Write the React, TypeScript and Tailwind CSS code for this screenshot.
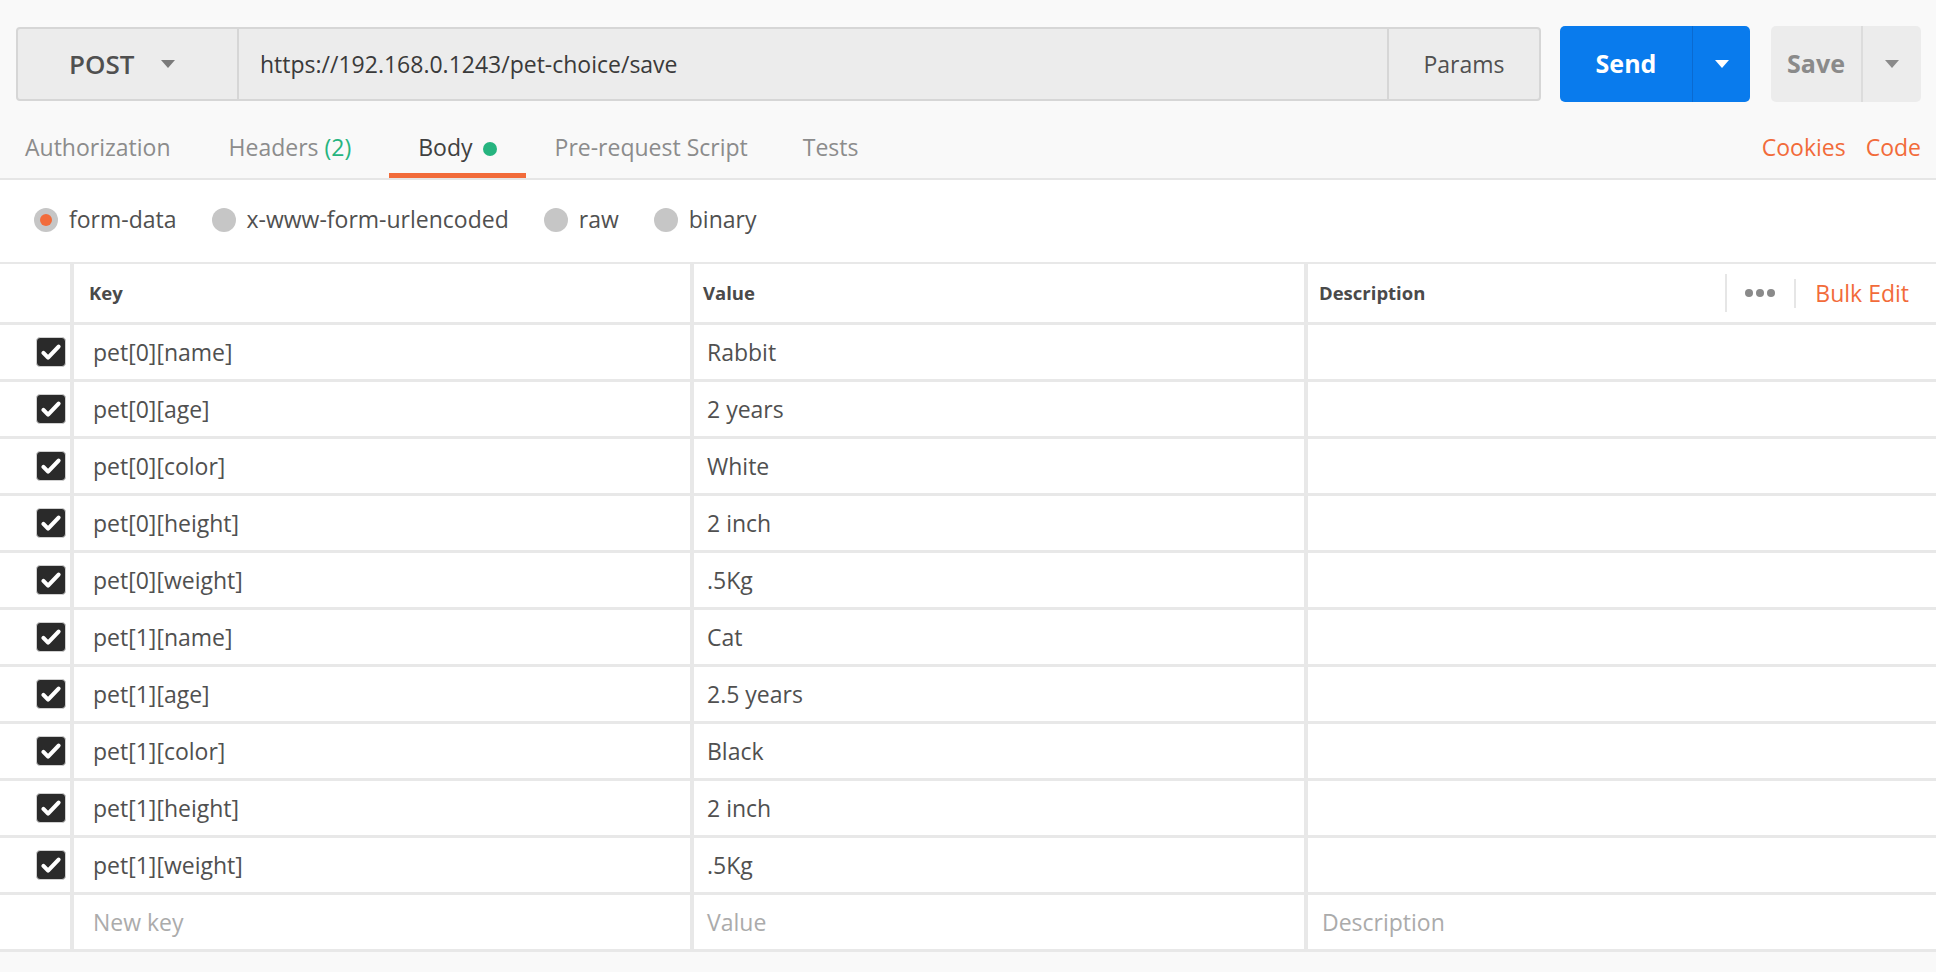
import React from "react";

const rows: [string, string][] = [
  ["pet[0][name]", "Rabbit"],
  ["pet[0][age]", "2 years"],
  ["pet[0][color]", "White"],
  ["pet[0][height]", "2 inch"],
  ["pet[0][weight]", ".5Kg"],
  ["pet[1][name]", "Cat"],
  ["pet[1][age]", "2.5 years"],
  ["pet[1][color]", "Black"],
  ["pet[1][height]", "2 inch"],
  ["pet[1][weight]", ".5Kg"],
];

function Caret({ className }: { className?: string }) {
  return (
    <svg width="14" height="8" viewBox="0 0 14 8" className={className}>
      <path d="M0 0h14L7 8z" fill="currentColor" />
    </svg>
  );
}

function Check() {
  return (
    <div className="flex h-[30px] w-[30px] items-center justify-center rounded-[4px] border border-[#d0d0d0] bg-[#2a2a2a]">
      <svg width="26" height="26" viewBox="0 0 24 24">
        <path d="M5 12.8l4.3 4.4L19 7" fill="none" stroke="#ffffff" strokeWidth="3.8" strokeLinecap="round" strokeLinejoin="round" />
      </svg>
    </div>
  );
}

function Radio({ on, label }: { on?: boolean; label: string }) {
  return (
    <div className="flex items-center">
      <div className="flex h-[24px] w-[24px] items-center justify-center rounded-full bg-[#c6c6c6]">
        {on && <div className="h-[12px] w-[12px] rounded-full bg-[#f26b3a]" />}
      </div>
      <span className="ml-[11px] text-[23px] text-[#505050]">{label}</span>
    </div>
  );
}

export default function App() {
  return (
    <div className="flex h-[972px] w-[1936px] flex-col overflow-hidden bg-[#f9f9f9] font-['Open_Sans',sans-serif]">
      {/* request bar */}
      <div className="flex items-start pl-[16px] pt-[26px]">
        <div className="mt-[1px] flex h-[74px] w-[1525px] rounded-[4px] border-2 border-[#d6d6d6] bg-[#ececec]">
          <div className="flex w-[221px] items-center border-r-2 border-[#d6d6d6] pl-[51px]">
            <span className="text-[26px] font-semibold text-[#505050]">POST</span>
            <Caret className="ml-[27px] text-[#7a7a7a]" />
          </div>
          <div className="flex flex-1 items-center pl-[21px] text-[23px] text-[#3a3a3a]">
            https://192.168.0.1243/pet-choice/save
          </div>
          <div className="flex w-[152px] items-center justify-center border-l-2 border-[#d6d6d6] text-[23px] text-[#505050]">
            Params
          </div>
        </div>
        <div className="ml-[19px] flex h-[76px] w-[190px] rounded-[5px] bg-[#097bed]">
          <div className="flex w-[133px] items-center justify-center border-r border-[#0a6ad0] text-[25px] font-bold text-white">
            Send
          </div>
          <div className="flex flex-1 items-center justify-center">
            <Caret className="text-white" />
          </div>
        </div>
        <div className="ml-[21px] flex h-[76px] w-[150px] rounded-[5px] bg-[#ececec]">
          <div className="flex w-[92px] items-center justify-center border-r-2 border-[#dcdcdc] text-[25px] font-bold text-[#8a8a8a]">
            Save
          </div>
          <div className="flex flex-1 items-center justify-center">
            <Caret className="text-[#8a8a8a]" />
          </div>
        </div>
      </div>

      {/* tabs */}
      <div className="flex h-[78px] items-end justify-between border-b-2 border-[#e6e6e6]">
        <div className="flex items-end">
          <div className="flex h-[56px] items-center border-b-[5px] border-transparent pl-[25px] pr-[28px] text-[23px] text-[#8c8c8c]">
            Authorization
          </div>
          <div className="flex h-[56px] items-center border-b-[5px] border-transparent pl-[30px] pr-[38px] text-[23px] text-[#8c8c8c]">
            Headers<span className="ml-[6px] text-[#26b47f]">(2)</span>
          </div>
          <div className="flex h-[56px] items-center border-b-[5px] border-[#f26b3a] px-[29px] text-[23px] text-[#404040]">
            Body<span className="ml-[10px] mt-[3px] h-[14px] w-[14px] rounded-full bg-[#26b47f]" />
          </div>
          <div className="flex h-[56px] items-center border-b-[5px] border-transparent pl-[29px] pr-[27px] text-[23px] text-[#8c8c8c]">
            Pre-request Script
          </div>
          <div className="flex h-[56px] items-center border-b-[5px] border-transparent px-[28px] text-[23px] text-[#8c8c8c]">
            Tests
          </div>
        </div>
        <div className="flex h-[56px] items-center border-b-[5px] border-transparent pr-[15px] text-[23px] text-[#f26b3a]">
          <span>Cookies</span>
          <span className="ml-[20px]">Code</span>
        </div>
      </div>

      {/* body types */}
      <div className="flex h-[82px] items-center gap-[35px] bg-white pb-[3px] pl-[34px]">
        <Radio on label="form-data" />
        <Radio label="x-www-form-urlencoded" />
        <Radio label="raw" />
        <Radio label="binary" />
      </div>

      {/* table */}
      <div className="border-t-2 border-[#e8e8e8] bg-white">
        <div className="flex h-[61px] border-b-[3px] border-[#e8e8e8] text-[18.5px] font-bold text-[#4a4a4a]">
          <div className="w-[74px] border-r-4 border-[#e8e8e8]" />
          <div className="flex w-[620px] items-center border-r-4 border-[#e8e8e8] pl-[15px]">Key</div>
          <div className="flex w-[614px] items-center border-r-4 border-[#e8e8e8] pl-[9px]">Value</div>
          <div className="flex flex-1 items-center pl-[11px] pr-[27px]">
            <span className="flex-1">Description</span>
            <div className="h-[38px] w-[2px] bg-[#e6e6e6]" />
            <div className="ml-[18px] flex gap-[3px]">
              <div className="h-[8px] w-[8px] rounded-full bg-[#8a8a8a]" />
              <div className="h-[8px] w-[8px] rounded-full bg-[#8a8a8a]" />
              <div className="h-[8px] w-[8px] rounded-full bg-[#8a8a8a]" />
            </div>
            <div className="ml-[19px] h-[29px] w-[2px] bg-[#e6e6e6]" />
            <span className="ml-[19px] text-[23px] font-normal text-[#f26b3a]">Bulk Edit</span>
          </div>
        </div>
        {rows.map(([k, v]) => (
          <div key={k} className="flex h-[57px] border-b-[3px] border-[#e8e8e8] text-[23px] text-[#505050]">
            <div className="flex w-[74px] items-center border-r-4 border-[#e8e8e8] pl-[36px]">
              <Check />
            </div>
            <div className="flex w-[620px] items-center border-r-4 border-[#e8e8e8] pl-[19px]">{k}</div>
            <div className="flex w-[614px] items-center border-r-4 border-[#e8e8e8] pl-[13px]">{v}</div>
            <div className="flex-1" />
          </div>
        ))}
        <div className="flex h-[57px] border-b-[3px] border-[#e8e8e8] text-[23px] text-[#ababab]">
          <div className="w-[74px] border-r-4 border-[#e8e8e8]" />
          <div className="flex w-[620px] items-center border-r-4 border-[#e8e8e8] pl-[19px]">New key</div>
          <div className="flex w-[614px] items-center border-r-4 border-[#e8e8e8] pl-[13px]">Value</div>
          <div className="flex flex-1 items-center pl-[14px]">Description</div>
        </div>
      </div>
      <div className="flex-1 bg-[#f9f9f9]" />
    </div>
  );
}
